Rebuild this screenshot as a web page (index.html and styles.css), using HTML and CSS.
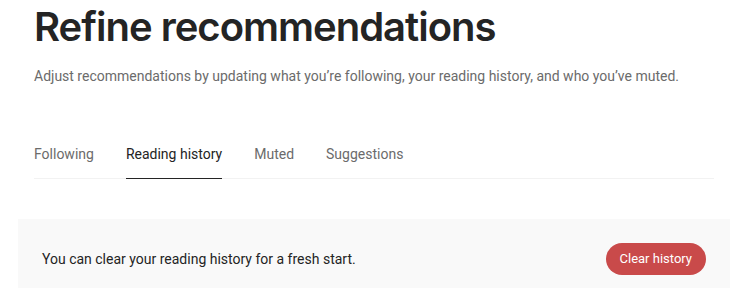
FILE: index.html
```html
<!DOCTYPE html>
<html lang="en">
<head>
    <meta charset="UTF-8" />
    <meta name="viewport" content="width=device-width, initial-scale=1.0" />
    <title>Refine recommendations</title>
    <link rel="stylesheet" href="styles.css">
</head>
<body>
    <div class="container">
        <h1>Refine recommendations</h1>
        <p class="intro">Adjust recommendations by updating what you’re following, your reading history, and who you’ve muted.</p>

        <!-- Tabs -->
        <div class="tabs">
            <a class="tab">Following</a>
            <a class="tab active">Reading history</a>
            <a class="tab">Muted</a>
            <a class="tab">Suggestions</a>
        </div>

        <!-- Reading history panel -->
        <div class="panel">
            <p>You can clear your reading history for a fresh start.</p>
            <button class="clear-btn">Clear history</button>
        </div>
    </div>
</body>
</html>
```

FILE: styles.css
```css
body {
    font-family: Roboto, "Liberation Sans", Arial, sans-serif;
    background-color: #ffffff;
    color: #242424;
    margin: 0;
}

.container {
    width: 680px;
    margin-left: 34px;
}

h1 {
    font-family: Inter, "Liberation Sans", sans-serif;
    font-size: 40px;
    font-weight: 600;
    letter-spacing: -1px;
    line-height: 52px;
    margin: 0;
    padding-top: 1px;
}

.intro {
    font-size: 14px;
    line-height: 20px;
    color: #6b6b6b;
    margin: 13px 0 0 0;
}

/* Tabs */
.tabs {
    display: flex;
    gap: 32px;
    margin-top: 58px;
    border-bottom: 1px solid #f2f2f2;
}

.tab {
    font-size: 14px;
    line-height: 20px;
    color: #6b6b6b;
    padding-bottom: 14px;
    border-bottom: 1px solid transparent;
    margin-bottom: -1px;
    cursor: pointer;
}

.tab.active {
    color: #242424;
    border-bottom-color: #242424;
}

/* Panel */
.panel {
    margin: 40px -16px 0 -16px;
    padding: 24px 24px;
    background-color: #f9f9f9;
    display: flex;
    justify-content: space-between;
    align-items: center;
}

.panel p {
    margin: 0;
    font-size: 14px;
    line-height: 20px;
}

.clear-btn {
    font-family: Roboto, "Liberation Sans", Arial, sans-serif;
    font-size: 13px;
    line-height: 20px;
    color: #ffffff;
    background-color: #c94a4a;
    border: none;
    border-radius: 99em;
    padding: 6px 14px;
    cursor: pointer;
}
```
